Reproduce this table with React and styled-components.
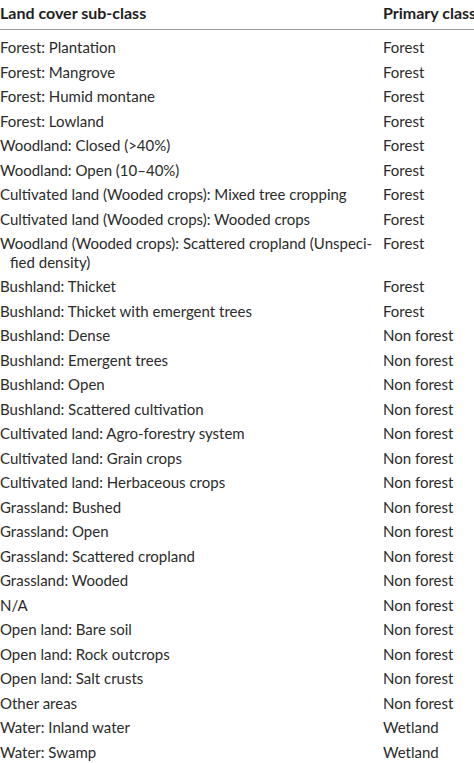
import React from "react";
import styled, { createGlobalStyle } from "styled-components";

const GlobalStyle = createGlobalStyle`
  html, body {
    margin: 0;
    padding: 0;
    background: #ffffff;
  }
  body {
    font-family: Lato, "Liberation Sans", sans-serif;
    color: #2b2b2b;
    overflow: hidden;
  }
`;

const Table = styled.div`
  width: 474px;
  display: grid;
  grid-template-columns: 383px 1fr;
`;

const HeadCell = styled.div`
  font-weight: 700;
  font-size: 16px;
  line-height: 19px;
  padding-top: 3px;
  height: 30px;
  box-sizing: border-box;
  color: #1e1e1e;
  border-bottom: 1px solid #9a9a9a;
  white-space: nowrap;
`;

const Cell = styled.div`
  font-size: 15px;
  line-height: 18.5px;
  padding-top: ${(p) => (p.$first ? "8px" : "3px")};
  padding-bottom: 3px;
  white-space: nowrap;
`;

const Wrapped = styled.span`
  display: block;
  padding-left: ${(p) => (p.$indent ? "10px" : "0")};
`;

const rows = [
  ["Forest: Plantation", "Forest"],
  ["Forest: Mangrove", "Forest"],
  ["Forest: Humid montane", "Forest"],
  ["Forest: Lowland", "Forest"],
  ["Woodland: Closed (>40%)", "Forest"],
  ["Woodland: Open (10–40%)", "Forest"],
  ["Cultivated land (Wooded crops): Mixed tree cropping", "Forest"],
  ["Cultivated land (Wooded crops): Wooded crops", "Forest"],
  [["Woodland (Wooded crops): Scattered cropland (Unspeci-", "fied density)"], "Forest"],
  ["Bushland: Thicket", "Forest"],
  ["Bushland: Thicket with emergent trees", "Forest"],
  ["Bushland: Dense", "Non forest"],
  ["Bushland: Emergent trees", "Non forest"],
  ["Bushland: Open", "Non forest"],
  ["Bushland: Scattered cultivation", "Non forest"],
  ["Cultivated land: Agro-forestry system", "Non forest"],
  ["Cultivated land: Grain crops", "Non forest"],
  ["Cultivated land: Herbaceous crops", "Non forest"],
  ["Grassland: Bushed", "Non forest"],
  ["Grassland: Open", "Non forest"],
  ["Grassland: Scattered cropland", "Non forest"],
  ["Grassland: Wooded", "Non forest"],
  ["N/A", "Non forest"],
  ["Open land: Bare soil", "Non forest"],
  ["Open land: Rock outcrops", "Non forest"],
  ["Open land: Salt crusts", "Non forest"],
  ["Other areas", "Non forest"],
  ["Water: Inland water", "Wetland"],
  ["Water: Swamp", "Wetland"],
];

export default function App() {
  return (
    <>
      <GlobalStyle />
      <Table>
        <HeadCell>Land cover sub-class</HeadCell>
        <HeadCell>Primary class</HeadCell>
        {rows.map(([sub, primary], i) => (
          <React.Fragment key={i}>
            <Cell $first={i === 0}>
              {Array.isArray(sub)
                ? sub.map((line, j) => (
                    <Wrapped key={j} $indent={j > 0}>
                      {line}
                    </Wrapped>
                  ))
                : sub}
            </Cell>
            <Cell $first={i === 0}>{primary}</Cell>
          </React.Fragment>
        ))}
      </Table>
    </>
  );
}
